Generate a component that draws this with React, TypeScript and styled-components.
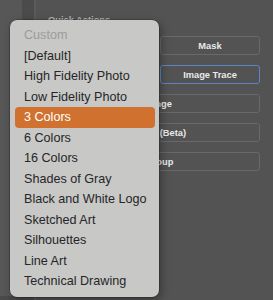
import React from "react";
import styled, { createGlobalStyle } from "styled-components";

const Global = createGlobalStyle`
  html, body { margin: 0; padding: 0; background: #535353; }
  body { width: 273px; height: 300px; overflow: hidden; }
  #root { width: 273px; height: 300px; }
`;

const Page = styled.div`
  position: relative;
  display: flex;
  width: 273px;
  height: 300px;
  font-family: "Liberation Sans", Arial, sans-serif;
`;

const Rail = styled.div`
  width: 22px;
  background: #575757;
  border-bottom: 4px solid #4a4a4a;
  box-sizing: border-box;
`;

const Gutter = styled.div`
  width: 12px;
  background: #4b4b4b;
  border-right: 2px solid #5a5a5a;
`;

const Panel = styled.div`
  flex: 1;
  background: #535353;
  padding: 15px 13px 0 12px;
  display: flex;
  flex-direction: column;
`;

const Header = styled.div`
  font-size: 9.3px;
  font-weight: bold;
  color: #b4b4b4;
  height: 21px;
  line-height: 11px;
`;

const Grid = styled.div`
  display: grid;
  grid-template-columns: 1fr 1fr;
  gap: 10px 12px;
`;

const QuickButton = styled.div<{ $wide?: boolean; $focus?: boolean }>`
  grid-column: ${(p) => (p.$wide ? "1 / span 2" : "auto")};
  height: 19px;
  box-sizing: border-box;
  border: 1px solid ${(p) => (p.$focus ? "#5b86c6" : "#696969")};
  border-radius: 3px;
  display: flex;
  align-items: center;
  justify-content: center;
  font-size: 9.3px;
  font-weight: bold;
  color: #e9e9e9;
`;

const Menu = styled.div`
  position: absolute;
  left: 10px;
  top: 20px;
  width: 149px;
  height: 277px;
  box-sizing: border-box;
  padding: 5px 4px 4px 5px;
  background: #c8c8c6;
  border-radius: 7px;
  box-shadow: 0 0 0 0.5px rgba(0, 0, 0, 0.35), 2px 3px 8px rgba(0, 0, 0, 0.35);
  display: flex;
  flex-direction: column;
`;

const Item = styled.div<{ $disabled?: boolean; $active?: boolean }>`
  height: 20.5px;
  flex: none;
  display: flex;
  align-items: center;
  padding-left: 9px;
  border-radius: 4px;
  font-size: 12.6px;
  color: ${(p) => (p.$disabled ? "#9c9c9c" : p.$active ? "#ffffff" : "#262626")};
  background: ${(p) => (p.$active ? "#d1712f" : "transparent")};
  white-space: nowrap;
`;

const items = [
  "[Default]",
  "High Fidelity Photo",
  "Low Fidelity Photo",
  "3 Colors",
  "6 Colors",
  "16 Colors",
  "Shades of Gray",
  "Black and White Logo",
  "Sketched Art",
  "Silhouettes",
  "Line Art",
  "Technical Drawing",
];

export default function App() {
  return (
    <Page>
      <Global />
      <Rail />
      <Gutter />
      <Panel>
        <Header>Quick Actions</Header>
        <Grid>
          <QuickButton>Unembed</QuickButton>
          <QuickButton>Mask</QuickButton>
          <QuickButton>Edit Original</QuickButton>
          <QuickButton $focus>Image Trace</QuickButton>
          <QuickButton $wide>Arrange</QuickButton>
          <QuickButton $wide>Mockup (Beta)</QuickButton>
          <QuickButton $wide>Ungroup</QuickButton>
        </Grid>
      </Panel>
      <Menu>
        <Item $disabled>Custom</Item>
        {items.map((t) => (
          <Item key={t} $active={t === "3 Colors"}>
            {t}
          </Item>
        ))}
      </Menu>
    </Page>
  );
}
